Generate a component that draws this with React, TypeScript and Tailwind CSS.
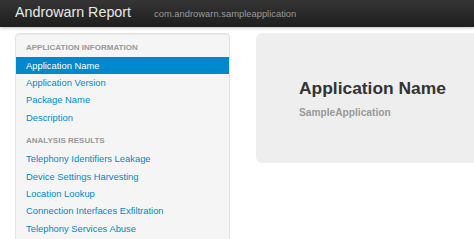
const font = { fontFamily: '"Liberation Sans", Arial, Helvetica, sans-serif' };

const infoLinks = ['Application Name', 'Application Version', 'Package Name', 'Description'];
const analysisLinks = [
  'Telephony Identifiers Leakage',
  'Device Settings Harvesting',
  'Location Lookup',
  'Connection Interfaces Exfiltration',
  'Telephony Services Abuse',
];

function NavHeader({ children, first }: { children: string; first?: boolean }) {
  return (
    <li
      className={`flex h-[19px] items-center px-[10px] text-[8px] font-bold uppercase text-[#999] ${
        first ? '' : 'mt-[5px]'
      }`}
    >
      {children}
    </li>
  );
}

function NavItem({ label, active }: { label: string; active?: boolean }) {
  return (
    <li>
      <a
        className={`flex h-[17.4px] items-center px-[10px] text-[9.4px] ${
          active ? 'bg-[#0088cc] text-white' : 'text-[#0088cc]'
        }`}
      >
        {label}
      </a>
    </li>
  );
}

export default function App() {
  return (
    <div className="h-[239px] w-full overflow-hidden bg-white" style={font}>
      {/* navbar */}
      <div className="flex h-[27px] items-center bg-linear-to-b from-[#353535] to-[#1e1e1e] pl-[15px] shadow-[0_1px_3px_rgba(0,0,0,0.25)]">
        <span className="pb-[2px] text-[14.3px] leading-none text-[#e8e8e8]">Androwarn Report</span>
        <span className="ml-[23px] text-[9.4px] leading-none text-[#999]">com.androwarn.sampleapplication</span>
      </div>

      <div className="flex gap-[26px] pl-[15px] pt-[6px]">
        {/* sidebar */}
        <div className="h-[260px] w-[215px] shrink-0 rounded-[4px] border border-[#e3e3e3] bg-[#f5f5f5] pt-[4px] shadow-[inset_0_1px_1px_rgba(0,0,0,0.05)]">
          <ul>
            <NavHeader first>Application Information</NavHeader>
            {infoLinks.map((l, i) => (
              <NavItem key={l} label={l} active={i === 0} />
            ))}
            <NavHeader>Analysis Results</NavHeader>
            {analysisLinks.map(l => (
              <NavItem key={l} label={l} />
            ))}
          </ul>
        </div>

        {/* hero unit */}
        <div className="h-[130px] w-[250px] shrink-0 rounded-[6px] bg-[#eeeeee] pl-[43px] pt-[44px]">
          <h1 className="text-[17.4px] font-bold leading-[22px] text-[#333]">Application Name</h1>
          <p className="mt-[7px] text-[10.2px] font-bold leading-[14px] text-[#999]">SampleApplication</p>
        </div>
      </div>
    </div>
  );
}
